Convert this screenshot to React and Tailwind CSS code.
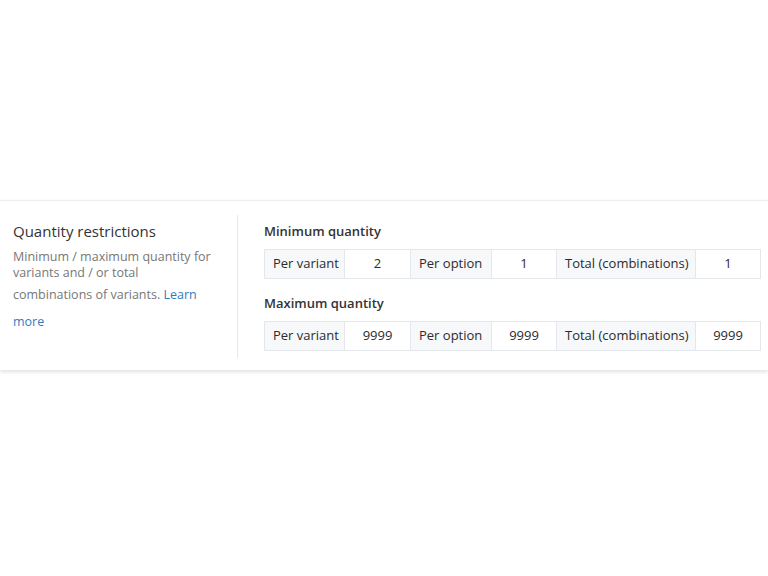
import React from "react";

const font = { fontFamily: '"Open Sans", "Noto Sans", sans-serif' };

function QtyRow({ values }) {
  return (
    <div className="flex h-[30px] text-[13px] text-[#2b2b2b]">
      <div className="w-[81px] flex items-center pl-2 bg-[#f6f8fa] border border-[#e3e7eb]">Per variant</div>
      <div className="w-[66px] flex items-center justify-center border-y border-r border-[#e3e7eb]">{values[0]}</div>
      <div className="w-[80px] flex items-center pl-2 bg-[#f6f8fa] border-y border-[#e3e7eb]">Per option</div>
      <div className="w-[66px] flex items-center justify-center border border-[#e3e7eb]">{values[1]}</div>
      <div className="w-[138px] flex items-center pl-2 bg-[#f6f8fa] border-y border-[#e3e7eb]">Total (combinations)</div>
      <div className="w-[66px] flex items-center justify-center border border-[#e3e7eb]">{values[2]}</div>
    </div>
  );
}

export default function App() {
  return (
    <div className="min-h-[576px] bg-white pt-[200px]" style={font}>
      <div className="flex border-t border-[#eceef0] pt-[14px] pb-[12px] shadow-[0_2px_4px_rgba(0,0,0,0.12)]">
        {/* left description */}
        <div className="w-[238px] shrink-0 border-r border-[#e6e8eb] pl-[13px] pr-[20px]">
          <h2 className="text-[15px] leading-[32px] mb-[2px] text-[#333]">Quantity restrictions</h2>
          <p className="text-[12.5px] leading-[16px] text-[#777]">
            Minimum / maximum quantity for variants and / or total
          </p>
          <p className="text-[12.5px] leading-[27px] text-[#777]">
            combinations of variants.{" "}
            <a href="#" className="text-[#2f7dbd]">Learn more</a>
          </p>
          <div className="h-[23px]" />
        </div>

        {/* right tables */}
        <div className="pl-[26px]">
          <div className="text-[13px] font-semibold text-[#333] leading-[32px] mb-[2px]">Minimum quantity</div>
          <QtyRow values={["2", "1", "1"]} />
          <div className="text-[13px] font-semibold text-[#333] leading-[20px] mt-[14px] mb-[8px]">Maximum quantity</div>
          <QtyRow values={["9999", "9999", "9999"]} />
        </div>
      </div>
    </div>
  );
}
